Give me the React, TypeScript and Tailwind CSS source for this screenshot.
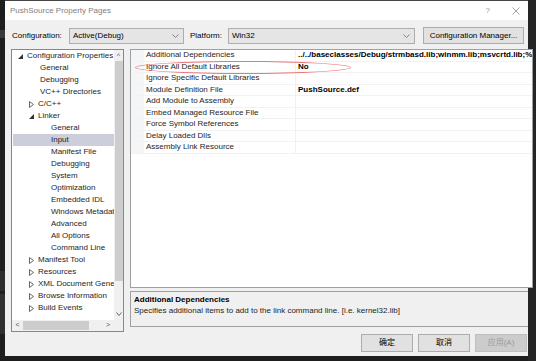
import React from "react";

const FONT = { fontFamily: '"Liberation Sans", Arial, "Noto Sans CJK SC", sans-serif' };

type Node = { label: string; depth: number; expander?: "open" | "closed"; selected?: boolean };

const TREE: Node[] = [
  { label: "Configuration Properties", depth: 0, expander: "open" },
  { label: "General", depth: 1 },
  { label: "Debugging", depth: 1 },
  { label: "VC++ Directories", depth: 1 },
  { label: "C/C++", depth: 1, expander: "closed" },
  { label: "Linker", depth: 1, expander: "open" },
  { label: "General", depth: 2 },
  { label: "Input", depth: 2, selected: true },
  { label: "Manifest File", depth: 2 },
  { label: "Debugging", depth: 2 },
  { label: "System", depth: 2 },
  { label: "Optimization", depth: 2 },
  { label: "Embedded IDL", depth: 2 },
  { label: "Windows Metadata", depth: 2 },
  { label: "Advanced", depth: 2 },
  { label: "All Options", depth: 2 },
  { label: "Command Line", depth: 2 },
  { label: "Manifest Tool", depth: 1, expander: "closed" },
  { label: "Resources", depth: 1, expander: "closed" },
  { label: "XML Document Generator", depth: 1, expander: "closed" },
  { label: "Browse Information", depth: 1, expander: "closed" },
  { label: "Build Events", depth: 1, expander: "closed" },
];

const PROPS: { name: string; value?: string }[] = [
  { name: "Additional Dependencies", value: "../../baseclasses/Debug/strmbasd.lib;winmm.lib;msvcrtd.lib;%" },
  { name: "Ignore All Default Libraries", value: "No" },
  { name: "Ignore Specific Default Libraries" },
  { name: "Module Definition File", value: "PushSource.def" },
  { name: "Add Module to Assembly" },
  { name: "Embed Managed Resource File" },
  { name: "Force Symbol References" },
  { name: "Delay Loaded Dlls" },
  { name: "Assembly Link Resource" },
];

const PAD = ["pl-[15px]", "pl-[27px]", "pl-[38px]"];

function Expander({ kind }: { kind: "open" | "closed" }) {
  return kind === "open" ? (
    <svg width="5" height="5" viewBox="0 0 5 5" className="mr-[4px] shrink-0">
      <polygon points="5,0 5,5 0,5" fill="#333" />
    </svg>
  ) : (
    <svg width="5" height="7" viewBox="0 0 5 7" className="mr-[4px] shrink-0">
      <polygon points="0.5,0.5 4.5,3.5 0.5,6.5" fill="none" stroke="#555" strokeWidth="0.9" />
    </svg>
  );
}

function Chevron() {
  return (
    <svg width="7" height="4" viewBox="0 0 7 4" className="shrink-0">
      <polyline points="0.5,0.5 3.5,3.5 6.5,0.5" fill="none" stroke="#777" strokeWidth="0.9" />
    </svg>
  );
}

function Dropdown({ text, className }: { text: string; className: string }) {
  return (
    <div className={`h-[16px] flex items-center justify-between pl-[3px] pr-[4px] bg-[#e5e5e5] border border-[#adadad] ${className}`}>
      <span className="text-[8px] text-black">{text}</span>
      <Chevron />
    </div>
  );
}

function Tree() {
  return (
    <div className="w-[113px] h-[283px] border border-[#828790] bg-white flex flex-col">
      <div className="flex flex-1 min-h-0">
        <div className="flex-1 min-w-0 overflow-hidden pl-[1px]">
          {TREE.map((n, i) => (
            <div
              key={i}
              className={`h-[12px] flex items-center whitespace-nowrap text-[8px] text-[#1e1e1e] ${n.selected ? "bg-[#cccedb]" : ""} ${
                n.expander ? (n.depth === 0 ? "pl-[5px]" : "pl-[16px]") : PAD[n.depth]
              }`}
            >
              {n.expander && <Expander kind={n.expander} />}
              <span>{n.label}</span>
            </div>
          ))}
        </div>
        <div className="w-[9px] bg-[#f0f0f0] flex flex-col items-center">
          <span className="h-[11px] text-[7px] leading-[11px] text-[#555]">^</span>
          <div className="w-[8px] h-[220px] bg-[#cdcdcd]" />
          <div className="flex-1" />
          <svg width="6" height="4" viewBox="0 0 6 4" className="mb-[4px]">
            <polyline points="0.5,0.5 3,3.5 5.5,0.5" fill="none" stroke="#555" strokeWidth="0.9" />
          </svg>
        </div>
      </div>
      <div className="h-[11px] bg-[#f0f0f0] flex items-center">
        <span className="w-[11px] text-center text-[7px] text-[#555]">&lt;</span>
        <div className="w-[66px] h-[9px] bg-[#cdcdcd]" />
        <div className="flex-1" />
        <span className="w-[12px] text-center text-[7px] text-[#555]">&gt;</span>
        <div className="w-[9px]" />
      </div>
    </div>
  );
}

function Grid() {
  return (
    <div className="relative h-[239px] border border-[#a0a0a0] bg-white">
      {PROPS.map((p, i) => (
        <div key={i} className="h-[11.5px] flex border-b border-[#f2f2f2]">
          <div className="w-[13px] bg-[#f4f5f7]" />
          <div className="w-[152px] pl-[2px] flex items-center text-[8px] text-[#1e1e1e] whitespace-nowrap border-r border-[#f0f0f0]">
            {p.name}
          </div>
          <div className="flex-1 min-w-0 pl-[2px] flex items-center text-[8px] font-bold text-black whitespace-nowrap overflow-hidden">
            {p.value}
          </div>
        </div>
      ))}
      <div className="absolute left-[4px] top-[11px] w-[216px] h-[13px] rounded-[50%] border border-[#e87878]" />
    </div>
  );
}

function Button({ label, disabled }: { label: string; disabled?: boolean }) {
  return (
    <div
      className={`w-[52px] h-[18px] flex items-center justify-center text-[8px] border ${
        disabled ? "bg-[#cccccc] border-[#bfbfbf] text-[#9a9a9a]" : "bg-[#e1e1e1] border-[#adadad] text-black"
      }`}
    >
      {label}
    </div>
  );
}

export default function App() {
  return (
    <div className="w-[536px] h-[361px] bg-[#1e1e1e] flex overflow-hidden" style={FONT}>
      <div className="w-[5px] flex flex-col pt-[30px] gap-[3px]">
        <div className="h-[8px] bg-[#3a3a3a]" />
        <div className="mt-[230px] h-[20px] bg-[#2d2d30]" />
        <div className="h-[40px] bg-[#303030]" />
      </div>
      <div className="w-[523px] h-[356px] bg-[#f0f0f0] flex flex-col border-t border-[#444]">
        <div className="h-[19px] bg-white flex items-center pl-[5px] pr-[8px]">
          <span className="text-[8px] text-[#808080]">PushSource Property Pages</span>
          <div className="flex-1" />
          <span className="text-[8px] text-[#999] mr-[22px]">?</span>
          <svg width="8" height="8" viewBox="0 0 8 8">
            <path d="M0.5 0.5 L7.5 7.5 M7.5 0.5 L0.5 7.5" stroke="#999" strokeWidth="0.9" />
          </svg>
        </div>
        <div className="mt-[7px] h-[17px] flex items-center pl-[7px] pr-[4px]">
          <span className="text-[8px] text-black w-[57px]">Configuration:</span>
          <Dropdown text="Active(Debug)" className="w-[115px]" />
          <span className="text-[8px] text-black ml-[6px] w-[38px]">Platform:</span>
          <Dropdown text="Win32" className="w-[187px]" />
          <div className="flex-1" />
          <div className="w-[101px] h-[17px] bg-[#e1e1e1] border border-[#adadad] flex items-center justify-center text-[8px] text-black">
            Configuration Manager...
          </div>
        </div>
        <div className="mt-[5px] flex pl-[6px] pr-[4px] gap-[6px]">
          <Tree />
          <div className="flex-1 flex flex-col gap-[3px]">
            <Grid />
            <div className="h-[36px] border border-[#a0a0a0] bg-[#f0f0f0] px-[3px] pt-[2px]">
              <div className="text-[8px] font-bold text-black leading-[11px]">Additional Dependencies</div>
              <div className="text-[8px] text-[#1e1e1e] leading-[11px]">
                Specifies additional items to add to the link command line. [i.e. kernel32.lib]
              </div>
            </div>
          </div>
        </div>
        <div className="mt-[2px] flex justify-end gap-[5px] pr-[1px]">
          <Button label="确定" />
          <Button label="取消" />
          <Button label="应用(A)" disabled />
        </div>
      </div>
      <div className="flex-1 bg-[#252526]" />
    </div>
  );
}
